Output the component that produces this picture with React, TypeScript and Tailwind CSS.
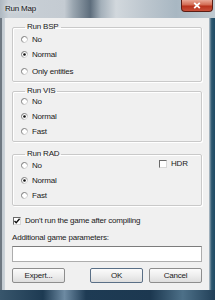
import { ReactNode } from "react";

const Radio = ({ checked, label }: { checked?: boolean; label: string }) => (
  <div className="flex h-[15px] items-center gap-[4px]">
    <svg width="7" height="7" viewBox="0 0 7 7" className="shrink-0">
      <defs>
        <linearGradient id="rg" x1="0" y1="0" x2="1" y2="1">
          <stop offset="0" stopColor="#5c5c5c" />
          <stop offset="0.55" stopColor="#9a9a9a" />
          <stop offset="1" stopColor="#f4f4f4" />
        </linearGradient>
      </defs>
      <circle cx="3.5" cy="3.5" r="3" fill="#fff" stroke="url(#rg)" strokeWidth="1" />
      {checked && <circle cx="3.5" cy="3.5" r="1.3" fill="#111" />}
    </svg>
    <span>{label}</span>
  </div>
);

const Check = ({ checked, label }: { checked?: boolean; label: string }) => (
  <div className="flex h-[15px] items-center gap-[4px]">
    <div className="relative h-[8px] w-[8px] shrink-0 border border-[#6a6a6a] border-b-[#d8d8d8] border-r-[#d8d8d8] bg-white">
      {checked && (
        <svg width="8" height="8" viewBox="0 0 8 8" className="absolute -left-[1px] -top-[1px]">
          <path d="M1.5 4 L3.2 5.8 L6.6 1.8" fill="none" stroke="#111" strokeWidth="1.4" />
        </svg>
      )}
    </div>
    <span>{label}</span>
  </div>
);

const Group = ({ title, className, children }: { title: string; className?: string; children: ReactNode }) => (
  <fieldset
    className={`rounded-[2px] border border-[#c9c9c9] pl-[8px] pr-[4px] pb-[2px] shadow-[inset_1px_1px_0_#ffffff,1px_1px_0_#ffffff] ${className ?? ""}`}
  >
    <legend className="ml-[4px] px-[2px] leading-[10px]">{title}</legend>
    {children}
  </fieldset>
);

const Button = ({ children, primary }: { children: ReactNode; primary?: boolean }) => (
  <button
    className={`h-[15px] w-[53px] rounded-[2px] border bg-gradient-to-b from-[#fbfbfb] via-[#eeeeee] to-[#dedede] text-[8px] leading-none text-[#1a1a1a] ${
      primary ? "border-[#5a6f86]" : "border-[#8d8d8d]"
    }`}
  >
    {children}
  </button>
);

export default function App() {
  return (
    <div className="flex h-[300px] w-[215px] flex-col overflow-hidden bg-[#2a4f66] font-['Liberation_Sans',Arial,sans-serif] text-[8px] tracking-[-0.2px] text-[#1a1a1a]">
      {/* title bar */}
      <div className="relative flex h-[18px] shrink-0 items-center bg-[linear-gradient(90deg,#aeb8c1_0%,#c9d0d6_4%,#c4cbd2_30%,#9aa6b0_34%,#5d6d7c_42%,#a4b0ba_47%,#d2d8dd_54%,#bcc6ce_68%,#a8b7c2_82%,#c0cad1_100%)] pl-[5px]">
        <span className="text-[8px] text-[#151515] [text-shadow:0_0_4px_#ffffff]">Run Map</span>
        <div className="absolute right-[2px] top-0 flex h-[12px] w-[32px] items-center justify-center rounded-b-[4px] border border-t-0 border-[#5b1d14] bg-[linear-gradient(180deg,#e9a896_0%,#d26a52_45%,#b8321c_55%,#c8503a_100%)]">
          <svg width="8" height="7" viewBox="0 0 8 7">
            <path d="M1.2 0.8 L6.8 6.2 M6.8 0.8 L1.2 6.2" stroke="#fff" strokeWidth="1.8" />
          </svg>
        </div>
      </div>

      <div className="flex flex-1">
        <div className="w-[5px] shrink-0 bg-[linear-gradient(90deg,#6e7882_0%,#6e7882_35%,#c2cad1_45%,#cdd4da_100%)]" />

        {/* client area */}
        <div className="flex w-[204px] shrink-0 flex-col bg-[#f0f0f0] px-[7px]">
          <Group title="Run BSP" className="mt-[4px]">
            <Radio label="No" />
            <Radio label="Normal" checked />
            <div className="mt-[2px]">
              <Radio label="Only entities" />
            </div>
          </Group>

          <Group title="Run VIS" className="mt-[4px]">
            <div className="-mt-[2px]">
              <Radio label="No" />
              <Radio label="Normal" checked />
              <Radio label="Fast" />
            </div>
          </Group>

          <Group title="Run RAD" className="mt-[7px]">
            <div className="-mt-[1px] flex">
              <div className="w-[138px]">
                <Radio label="No" />
                <Radio label="Normal" checked />
                <Radio label="Fast" />
              </div>
              <div className="-mt-[2px]">
                <Check label="HDR" />
              </div>
            </div>
          </Group>

          <div className="mt-[7px] pl-[1px]">
            <Check label="Don't run the game after compiling" checked />
          </div>

          <div className="mt-[5px] h-[10px] leading-[10px]">Additional game parameters:</div>
          <div className="mt-[3px] h-[16px] border border-[#adadad] border-t-[#7c7c7c] bg-white" />

          <div className="mt-[6px] flex justify-between">
            <Button>Expert...</Button>
            <div className="flex gap-[6px]">
              <Button primary>OK</Button>
              <Button>Cancel</Button>
            </div>
          </div>
        </div>

        <div className="flex-1 bg-[linear-gradient(90deg,#c3ccd3_0%,#6f8a9b_20%,#2c5870_45%,#1f4a63_100%)]" />
      </div>

      {/* bottom frame */}
      <div className="h-[10px] shrink-0 bg-[linear-gradient(90deg,#38566c_0%,#1d3a52_20%,#6d8aa2_30%,#1e3b54_40%,#1c3850_70%,#4d7088_85%,#213f57_100%)]" />
    </div>
  );
}
